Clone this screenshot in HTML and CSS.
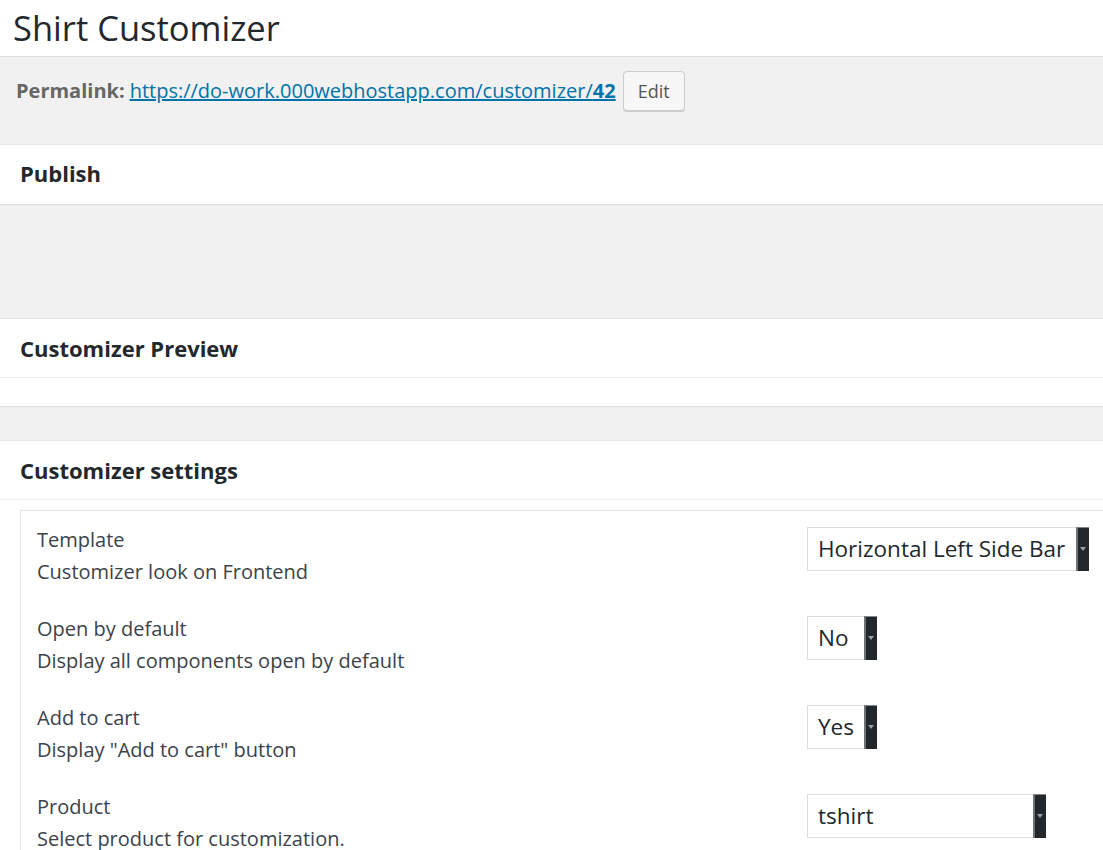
FILE: index.html
```html
<!DOCTYPE html>
<html lang="en">
<head>
    <meta charset="UTF-8">
    <meta name="viewport" content="width=device-width, initial-scale=1.0">
    <title>Shirt Customizer</title>
    <link rel="stylesheet" href="styles.css">
</head>
<body>
    <div class="wrap">
        <div class="title-bar">
            <h1>Shirt Customizer</h1>
        </div>
        <div class="permalink-row">
            <strong class="permalink-label">Permalink:</strong>
            <a href="#" class="permalink">https://do-work.000webhostapp.com/customizer/<b>42</b></a>
            <button type="button" class="edit-btn">Edit</button>
        </div>

        <div class="postbox">
            <h2 class="postbox-title">Publish</h2>
        </div>
        <div class="spacer-lg"></div>

        <div class="postbox">
            <h2 class="postbox-title divided">Customizer Preview</h2>
            <div class="preview-body"></div>
        </div>
        <div class="spacer-sm"></div>

        <div class="postbox">
            <h2 class="postbox-title divided">Customizer settings</h2>
            <div class="settings-body">
                <div class="settings-table">
                    <div class="setting-row">
                        <div class="setting-text">
                            <div>Template</div>
                            <div>Customizer look on Frontend</div>
                        </div>
                        <div class="select select-wide">
                            <span class="select-value">Horizontal Left Side Bar</span>
                            <span class="select-arrow"></span>
                        </div>
                    </div>
                    <div class="setting-row">
                        <div class="setting-text">
                            <div>Open by default</div>
                            <div>Display all components open by default</div>
                        </div>
                        <div class="select select-small">
                            <span class="select-value">No</span>
                            <span class="select-arrow"></span>
                        </div>
                    </div>
                    <div class="setting-row">
                        <div class="setting-text">
                            <div>Add to cart</div>
                            <div>Display "Add to cart" button</div>
                        </div>
                        <div class="select select-small">
                            <span class="select-value">Yes</span>
                            <span class="select-arrow"></span>
                        </div>
                    </div>
                    <div class="setting-row">
                        <div class="setting-text">
                            <div>Product</div>
                            <div>Select product for customization.</div>
                        </div>
                        <div class="select select-product">
                            <span class="select-value">tshirt</span>
                            <span class="select-arrow"></span>
                        </div>
                    </div>
                </div>
            </div>
        </div>
    </div>
</body>
</html>
```

FILE: styles.css
```css
body {
    margin: 0;
    padding: 0;
    background-color: #f1f1f1;
    font-family: "Open Sans", "Noto Sans", sans-serif;
    color: #444;
    overflow: hidden;
}
.wrap {
    width: 1140px;
}
.title-bar {
    background-color: #fff;
    border-bottom: 1px solid #ddd;
    height: 57px;
    box-sizing: border-box;
}
h1 {
    margin: 0;
    padding: 3px 0 0 13px;
    font-size: 34.5px;
    font-weight: 400;
    line-height: 50px;
    color: #23282d;
}
.permalink-row {
    display: flex;
    align-items: center;
    height: 87px;
    padding: 0 0 20px 16px;
    box-sizing: border-box;
    font-size: 20px;
}
.permalink-label {
    color: #666;
    margin-right: 5px;
}
.permalink {
    color: #0073aa;
    text-decoration: underline;
}
.edit-btn {
    margin-left: 7px;
    height: 40px;
    padding: 0 14px;
    background-color: #f7f7f7;
    border: 1px solid #ccc;
    border-radius: 4px;
    box-shadow: 0 1px 0 #ccc;
    color: #555;
    font-family: inherit;
    font-size: 18px;
}
.postbox {
    background-color: #fff;
    border-top: 1px solid #e5e5e5;
    box-shadow: 0 1px 1px rgba(0, 0, 0, 0.08);
}
.postbox-title {
    margin: 0;
    padding: 0 20px;
    height: 59px;
    line-height: 57px;
    font-size: 22px;
    font-weight: 700;
    color: #23282d;
}
.postbox-title.divided {
    height: 58px;
    line-height: 58px;
    border-bottom: 1px solid #eee;
}
.spacer-lg {
    height: 114px;
}
.spacer-sm {
    height: 34px;
}
.preview-body {
    height: 28px;
}
.settings-body {
    padding: 10px 0 0 20px;
}
.settings-table {
    border: 1px solid #e5e5e5;
    border-right: none;
    padding: 13px 0 0 16px;
}
.setting-row {
    display: flex;
    margin-bottom: 25px;
}
.setting-text {
    width: 770px;
    font-size: 20px;
    line-height: 32px;
    color: #3c434a;
}
.select {
    display: flex;
    margin-top: 3px;
    height: 44px;
    box-sizing: border-box;
    background-color: #fff;
    border: 1px solid #ddd;
}
.select-wide {
    width: 282px;
}
.select-small {
    width: 70px;
}
.select-product {
    width: 239px;
}
.select-value {
    flex: 1;
    padding-left: 10px;
    font-size: 22.5px;
    line-height: 41px;
    color: #23282d;
    white-space: nowrap;
    overflow: hidden;
}
.select-arrow {
    position: relative;
    width: 11px;
    margin: -1px -1px -1px 0;
    background-color: #22272b;
    border-left: 2px solid #6d7377;
    border-top: 1px solid #888;
}
.select-arrow::after {
    content: "";
    position: absolute;
    left: 2px;
    top: 19px;
    border-left: 3px solid transparent;
    border-right: 3px solid transparent;
    border-top: 4px solid #9aa0a4;
}
```
